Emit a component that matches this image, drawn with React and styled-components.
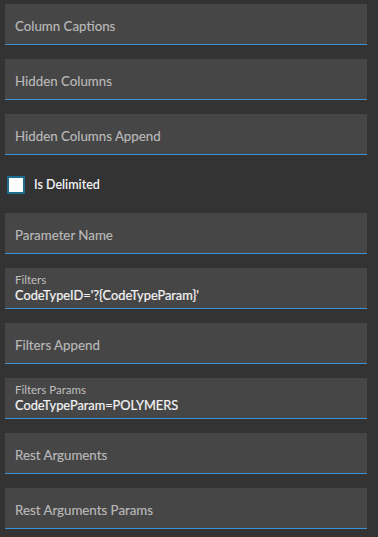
import React from "react";
import styled, { createGlobalStyle } from "styled-components";

const Global = createGlobalStyle`
  html, body { margin: 0; padding: 0; background: #333333; }
  body { font-family: Lato, "Noto Sans", sans-serif; }
`;

const Page = styled.div`
  display: flex;
  flex-direction: column;
  gap: 14px;
  padding: 4px 11px 8px 5px;
  width: 378px;
  box-sizing: border-box;
`;

const Field = styled.div`
  height: 36px;
  background: #464646;
  border-bottom: 1px solid #3d92d6;
  padding: 0 10px;
  display: flex;
  flex-direction: column;
  justify-content: ${(p) => (p.$filled ? "flex-end" : "center")};
  padding-bottom: ${(p) => (p.$filled ? "4px" : "0")};
  padding-top: ${(p) => (p.$filled ? "0" : "4px")};
`;

const Placeholder = styled.span`
  color: #bababa;
  font-size: 13.3px;
  line-height: 18px;
  -webkit-text-stroke: 0.15px #bababa;
`;

const SmallLabel = styled.span`
  color: #bfbfbf;
  font-size: 11.5px;
  line-height: 14px;
`;

const Value = styled.span`
  color: #f4f4f4;
  font-size: 12.8px;
  line-height: 17px;
  -webkit-text-stroke: 0.2px #f4f4f4;
`;

const CheckRow = styled.label`
  height: 30px;
  display: flex;
  align-items: center;
  gap: 9px;
  padding-left: 2px;
`;

const Box = styled.span`
  width: 14px;
  height: 14px;
  border: 2px solid #1d6e8e;
  background: #fdfdfd;
  border-radius: 1px;
  margin-top: 1px;
`;

const CheckText = styled.span`
  color: #f4f4f4;
  font-size: 12.5px;
  font-weight: 600;
`;

const fields = [
  { label: "Column Captions" },
  { label: "Hidden Columns" },
  { label: "Hidden Columns Append" },
  { check: "Is Delimited" },
  { label: "Parameter Name" },
  { label: "Filters", value: "CodeTypeID='?{CodeTypeParam}'" },
  { label: "Filters Append" },
  { label: "Filters Params", value: "CodeTypeParam=POLYMERS" },
  { label: "Rest Arguments" },
  { label: "Rest Arguments Params" },
];

export default function App() {
  return (
    <>
      <Global />
      <Page>
        {fields.map((f, i) =>
          f.check ? (
            <CheckRow key={i}>
              <Box />
              <CheckText>{f.check}</CheckText>
            </CheckRow>
          ) : f.value ? (
            <Field key={i} $filled>
              <SmallLabel>{f.label}</SmallLabel>
              <Value>{f.value}</Value>
            </Field>
          ) : (
            <Field key={i}>
              <Placeholder>{f.label}</Placeholder>
            </Field>
          )
        )}
      </Page>
    </>
  );
}
